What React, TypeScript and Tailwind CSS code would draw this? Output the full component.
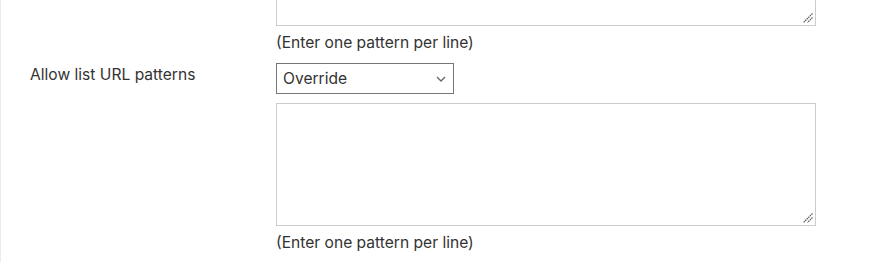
import React from "react";

function Hint() {
  return <div className="h-[20px] leading-[20px] mt-[7px] text-[15.6px] text-[#333]">(Enter one pattern per line)</div>;
}

function Area({ className = "" }: { className?: string }) {
  return (
    <div className={"relative w-[540px] h-[123px] " + className}>
      <textarea className="block w-full h-full border border-[#cccccc] bg-white resize-none outline-none" />
      <svg className="absolute right-[3px] bottom-[3px] pointer-events-none" width="10" height="10" viewBox="0 0 10 10">
        <path d="M9.5 0.5 L0.5 9.5 M9.5 4.5 L4.5 9.5" fill="none" stroke="#5a5a5a" strokeWidth="1.2" strokeDasharray="1.6 0.6" />
      </svg>
    </div>
  );
}

export default function App() {
  return (
    <div
      className="w-[879px] h-[262px] overflow-hidden bg-white border-l border-[#ebebeb] text-[#333]"
      style={{ fontFamily: "Inter, 'Liberation Sans', sans-serif" }}
    >
      <div className="grid grid-cols-[246px_540px] pl-[29px] mt-[-97px]">
        <div />
        <div className="flex flex-col">
          <Area />
          <Hint />
        </div>
        <div className="pt-[1px] text-[15.6px] leading-[20px] text-[#333] mt-[11px]">Allow list URL patterns</div>
        <div className="flex flex-col mt-[10px]">
          <div className="relative w-[178px] h-[31px]">
            <select className="appearance-none w-full h-full border border-[#767676] bg-white pl-[6px] text-[15.6px] text-[#333] outline-none rounded-none">
              <option>Override</option>
            </select>
            <svg className="absolute right-[8px] top-[13px] pointer-events-none" width="10" height="6" viewBox="0 0 10 6">
              <path d="M1 1 L5 5 L9 1" fill="none" stroke="#666" strokeWidth="1.3" />
            </svg>
          </div>
          <Area className="mt-[9px]" />
          <Hint />
        </div>
      </div>
    </div>
  );
}
